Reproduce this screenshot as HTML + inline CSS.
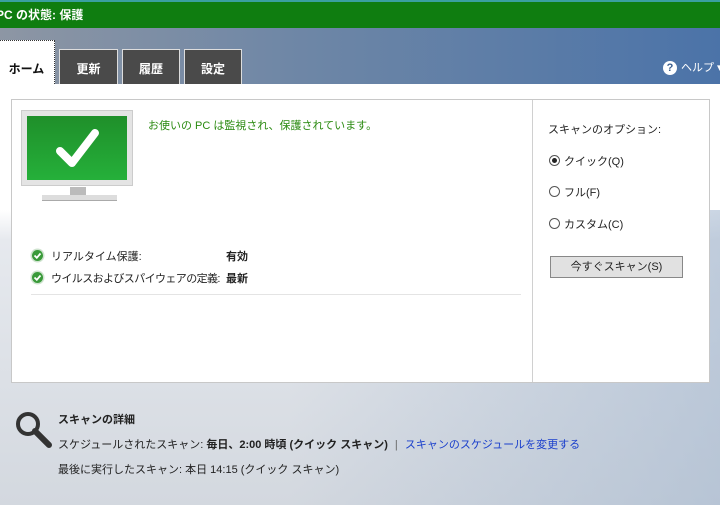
<!DOCTYPE html>
<html><head><meta charset="utf-8"><style>
*{margin:0;padding:0;box-sizing:border-box}
body{width:720px;height:505px;overflow:hidden;position:relative;font-family:"Liberation Sans","Noto Sans CJK JP",sans-serif;font-size:11px;color:#222;white-space:nowrap;
background:linear-gradient(to bottom,#fff 0,#fff 210px,#e6e9ee 240px,#d3d8df 505px);}
.bg2{position:absolute;left:0;top:210px;width:720px;height:295px;background:linear-gradient(to right,rgba(255,255,255,0) 40%,rgba(160,180,205,.55) 100%);}
.top{position:absolute;left:0;top:0;width:720px;height:28px;background:#0f7d10;border-top:2px solid #3aa0a0;color:#fff;font-weight:bold;font-size:12px;line-height:26px}
.hdr{position:absolute;left:0;top:28px;width:720px;height:56px;background:linear-gradient(to right,#8d96a4 0,#6f87a6 40%,#4b73a8 100%)}
.tab{position:absolute;top:49px;height:35px;background:#4a4a4a;border:1px solid #ddd;border-bottom:none;color:#fff;font-weight:bold;font-size:12px;text-align:center;line-height:38px}
.help{position:absolute;left:663px;top:59px;color:#fff;font-size:11px}
.help b{display:inline-block;width:14px;height:14px;border-radius:50%;background:#fff;color:#3a5f90;font-size:11px;text-align:center;line-height:14px;margin-right:4px}
.box{position:absolute;left:11px;top:99px;width:699px;height:284px;background:#fff;border:1px solid #c8c8c8}
.div{position:absolute;left:520px;top:0;width:1px;height:282px;background:#d0d0d0}
.radio{position:absolute;left:538px}
.radio i{display:inline-block;width:11px;height:11px;border:1px solid #555;border-radius:50%;vertical-align:-1px;margin-right:4px;position:relative}
.ck{display:inline-block;width:15px;height:15px;vertical-align:-3px;margin-right:6px}
</style></head><body>
<div class="bg2"></div>
<div class="top"><span style="position:absolute;left:-4px">PC の状態: 保護</span></div>
<div class="hdr"></div>
<div class="tab" style="left:-2px;top:40px;width:57px;height:44px;background:#fff;color:#111;border:1px dotted #333;border-bottom:none;line-height:56px">ホーム</div>
<div class="tab" style="left:59px;width:59px">更新</div>
<div class="tab" style="left:122px;width:58px">履歴</div>
<div class="tab" style="left:184px;width:58px">設定</div>
<div class="help"><b>?</b>ヘルプ ▾</div>
<div class="box">
 <div style="position:absolute;left:9px;top:10px;width:112px;height:76px;background:#e4e4e4;border:1px solid #ccc;padding:5px;">
  <div style="width:100%;height:100%;background:linear-gradient(#1f8f2a,#25b03a);"></div>
  <svg style="position:absolute;left:30px;top:14px" width="50" height="48"><path d="M8 26 L20 38 L43 8" stroke="#fff" stroke-width="8" fill="none" stroke-linecap="round" stroke-linejoin="round"/></svg>
 </div>
 <div style="position:absolute;left:58px;top:87px;width:16px;height:8px;background:#bbb"></div>
 <div style="position:absolute;left:30px;top:95px;width:75px;height:6px;background:#ddd;border-bottom:1px solid #aaa"></div>
 <div style="position:absolute;left:136px;top:17px;color:#2a8a10">お使いの PC は監視され、保護されています。</div>
 <div style="position:absolute;left:18px;top:148px"><svg class="ck" viewBox="0 0 15 15"><circle cx="7.5" cy="7.5" r="7" fill="#cfe3cf"/><circle cx="7.5" cy="7.5" r="5.5" fill="#3a9a3a"/><path d="M4.5 7.5 L6.8 9.8 L10.5 5.5" stroke="#fff" stroke-width="1.8" fill="none"/></svg>リアルタイム保護:</div>
 <div style="position:absolute;left:214px;top:148px;font-weight:bold">有効</div>
 <div style="position:absolute;left:18px;top:170px;letter-spacing:-0.6px"><svg class="ck" viewBox="0 0 15 15"><circle cx="7.5" cy="7.5" r="7" fill="#cfe3cf"/><circle cx="7.5" cy="7.5" r="5.5" fill="#3a9a3a"/><path d="M4.5 7.5 L6.8 9.8 L10.5 5.5" stroke="#fff" stroke-width="1.8" fill="none"/></svg>ウイルスおよびスパイウェアの定義:</div>
 <div style="position:absolute;left:214px;top:170px;font-weight:bold">最新</div>
 <div style="position:absolute;left:19px;top:194px;width:490px;height:1px;background:#e4e4e4"></div>
 <div class="div"></div>
</div>
<div style="position:absolute;left:548px;top:121px">スキャンのオプション:</div>
<div class="radio" style="left:549px;top:153px"><i><span style="position:absolute;left:2px;top:2px;width:5px;height:5px;border-radius:50%;background:#222"></span></i>クイック(Q)</div>
<div class="radio" style="left:549px;top:184px"><i></i>フル(F)</div>
<div class="radio" style="left:549px;top:216px"><i></i>カスタム(C)</div>
<div style="position:absolute;left:550px;top:256px;width:133px;height:22px;background:#e1e1e1;border:1px solid #888;text-align:center;line-height:20px">今すぐスキャン(S)</div>
<svg style="position:absolute;left:14px;top:410px" width="40" height="40"><circle cx="14" cy="14" r="10" stroke="#333" stroke-width="4" fill="none"/><path d="M21 21 L35 35" stroke="#333" stroke-width="6" stroke-linecap="round"/></svg>
<div style="position:absolute;left:58px;top:411px;font-weight:bold">スキャンの詳細</div>
<div style="position:absolute;left:58px;top:436px">スケジュールされたスキャン: <b>毎日、2:00 時頃 (クイック スキャン)</b> <span style="color:#666;margin:0 4px">|</span> <span style="color:#1a3fcc">スキャンのスケジュールを変更する</span></div>
<div style="position:absolute;left:58px;top:461px">最後に実行したスキャン: 本日 14:15 (クイック スキャン)</div>
</body></html>
